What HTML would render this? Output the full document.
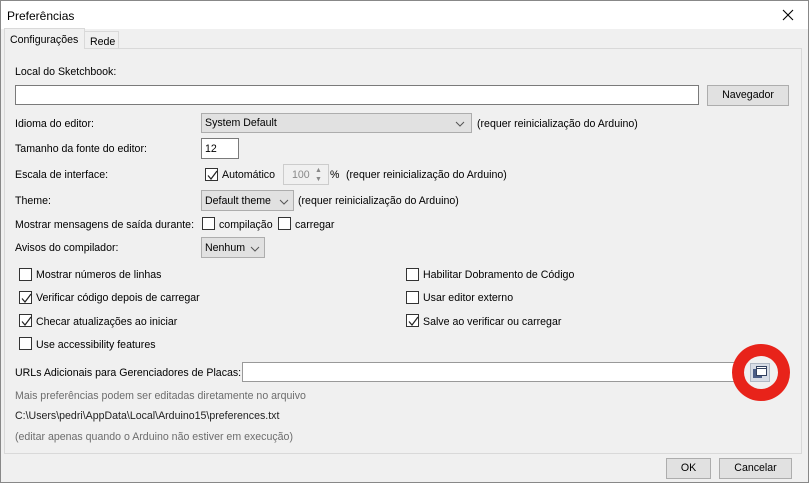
<!DOCTYPE html>
<html><head><meta charset="utf-8"><style>
*{margin:0;padding:0;box-sizing:border-box}
body{width:809px;height:483px;background:#f0f0f0;font-family:"Liberation Sans",sans-serif;font-size:10.6px;color:#000;position:relative;overflow:hidden}
.a{position:absolute;white-space:nowrap}
.t{position:absolute;white-space:nowrap;line-height:14px;transform:translateY(-6px)}
.g{color:#6d6d6d}
.in{position:absolute;background:#fff;border:1px solid #7a7a7a}
.cb{position:absolute;background:#e1e1e1;border:1px solid #adadad}
.btn{position:absolute;background:#e1e1e1;border:1px solid #adadad;text-align:center;line-height:19px}
.ck{position:absolute;width:13px;height:13px;border:1px solid #333;background:#fff}
.ck svg{position:absolute;left:1px;top:1px}
.arr{position:absolute;right:6px;top:4px}
</style></head><body>
<div class="a" style="left:0;top:0;width:809px;height:483px;border:1px solid #888"></div>
<div class="a" style="left:1px;top:1px;width:807px;height:28px;background:#fff"></div>
<div class="t" style="left:7px;top:15px;font-size:12px">Preferências</div>
<svg class="a" style="left:782px;top:9px" width="12" height="12"><path d="M1 1l10 10M11 1L1 11" stroke="#000" stroke-width="1.1"/></svg>
<div class="a" style="left:4px;top:48px;width:798px;height:406px;border:1px solid #d9d9d9;background:#f0f0f0"></div>
<div class="a" style="left:4px;top:28px;width:81px;height:21px;background:#f0f0f0;border:1px solid #d9d9d9;border-bottom:none"></div>
<div class="a" style="left:85px;top:31px;width:34px;height:18px;background:#f0f0f0;border:1px solid #d9d9d9;border-left:none"></div>
<div class="t" style="left:10px;top:39px">Configurações</div>
<div class="t" style="left:90px;top:41px">Rede</div>

<div class="t" style="left:15px;top:71px">Local do Sketchbook:</div>
<div class="in" style="left:15px;top:85px;width:684px;height:20px"></div>
<div class="btn" style="left:707px;top:85px;width:82px;height:21px">Navegador</div>

<div class="t" style="left:15px;top:123px">Idioma do editor:</div>
<div class="cb" style="left:201px;top:113px;width:271px;height:20px"><span class="a" style="left:3px;top:3px">System Default</span><svg class="arr" width="10" height="10" style="top:5px"><path d="M1 3l4 4 4-4" stroke="#555" fill="none"/></svg></div>
<div class="t" style="left:477px;top:123px">(requer reinicialização do Arduino)</div>

<div class="t" style="left:15px;top:148px">Tamanho da fonte do editor:</div>
<div class="in" style="left:201px;top:138px;width:38px;height:21px"><span class="a" style="left:3px;top:4px">12</span></div>

<div class="t" style="left:15px;top:174px">Escala de interface:</div>
<div class="ck" style="left:205px;top:168px"><svg width="11" height="11"><path d="M1 5.5l3 3.5 6-8" stroke="#222" fill="none" stroke-width="1.2"/></svg></div>
<div class="t" style="left:222px;top:174px">Automático</div>
<div class="a" style="left:283px;top:164px;width:46px;height:21px;border:1px solid #ccc;background:#f0f0f0"><span class="a" style="left:8px;top:4px;color:#888">100</span><span class="a" style="left:31px;top:1px;font-size:7px;color:#888;line-height:9px">▲<br>▼</span></div>
<div class="t" style="left:330px;top:174px">%</div>
<div class="t" style="left:346px;top:174px">(requer reinicialização do Arduino)</div>

<div class="t" style="left:15px;top:200px">Theme:</div>
<div class="cb" style="left:201px;top:190px;width:93px;height:21px"><span class="a" style="left:3px;top:4px">Default theme</span><svg class="arr" width="10" height="10" style="top:6px;right:4px"><path d="M1 3l4 4 4-4" stroke="#555" fill="none"/></svg></div>
<div class="t" style="left:298px;top:200px">(requer reinicialização do Arduino)</div>

<div class="t" style="left:15px;top:224px">Mostrar mensagens de saída durante:</div>
<div class="ck" style="left:202px;top:217px"></div>
<div class="t" style="left:219px;top:224px">compilação</div>
<div class="ck" style="left:278px;top:217px"></div>
<div class="t" style="left:295px;top:224px">carregar</div>

<div class="t" style="left:15px;top:247px">Avisos do compilador:</div>
<div class="cb" style="left:201px;top:237px;width:64px;height:21px"><span class="a" style="left:3px;top:4px">Nenhum</span><svg class="arr" width="10" height="10" style="top:6px;right:4px"><path d="M1 3l4 4 4-4" stroke="#555" fill="none"/></svg></div>

<div class="ck" style="left:19px;top:268px"></div><div class="t" style="left:36px;top:274px">Mostrar números de linhas</div>
<div class="ck" style="left:19px;top:291px"><svg width="11" height="11"><path d="M1 5.5l3 3.5 6-8" stroke="#222" fill="none" stroke-width="1.2"/></svg></div><div class="t" style="left:36px;top:297px">Verificar código depois de carregar</div>
<div class="ck" style="left:19px;top:314px"><svg width="11" height="11"><path d="M1 5.5l3 3.5 6-8" stroke="#222" fill="none" stroke-width="1.2"/></svg></div><div class="t" style="left:36px;top:321px">Checar atualizações ao iniciar</div>
<div class="ck" style="left:19px;top:337px"></div><div class="t" style="left:36px;top:344px">Use accessibility features</div>

<div class="ck" style="left:406px;top:268px"></div><div class="t" style="left:423px;top:274px">Habilitar Dobramento de Código</div>
<div class="ck" style="left:406px;top:291px"></div><div class="t" style="left:423px;top:297px">Usar editor externo</div>
<div class="ck" style="left:406px;top:314px"><svg width="11" height="11"><path d="M1 5.5l3 3.5 6-8" stroke="#222" fill="none" stroke-width="1.2"/></svg></div><div class="t" style="left:423px;top:321px">Salve ao verificar ou carregar</div>

<div class="t" style="left:15px;top:372px">URLs Adicionais para Gerenciadores de Placas:</div>
<div class="in" style="left:242px;top:362px;width:499px;height:20px;border-color:#999"></div>
<div class="a" style="left:732px;top:344px;width:58px;height:57px;border-radius:50%;border:12px solid #e8231a;background:#f0f0f0"></div>
<div class="a" style="left:750px;top:363px;width:20px;height:19px;background:#d8dde6;border:1px solid #b0b8c4"></div>
<svg class="a" style="left:752px;top:364px" width="16" height="16"><rect x="1" y="5" width="9" height="9" fill="#4a5d86"/><rect x="4.5" y="2.5" width="10" height="9" fill="#fff" stroke="#33415f"/><line x1="4.5" y1="4.5" x2="14.5" y2="4.5" stroke="#33415f"/></svg>

<div class="t g" style="left:15px;top:395px">Mais preferências podem ser editadas diretamente no arquivo</div>
<div class="t" style="left:15px;top:415px;color:#222">C:\Users\pedri\AppData\Local\Arduino15\preferences.txt</div>
<div class="t g" style="left:15px;top:436px">(editar apenas quando o Arduino não estiver em execução)</div>

<div class="btn" style="left:666px;top:458px;width:45px;height:21px">OK</div>
<div class="btn" style="left:719px;top:458px;width:73px;height:21px">Cancelar</div>
</body></html>
